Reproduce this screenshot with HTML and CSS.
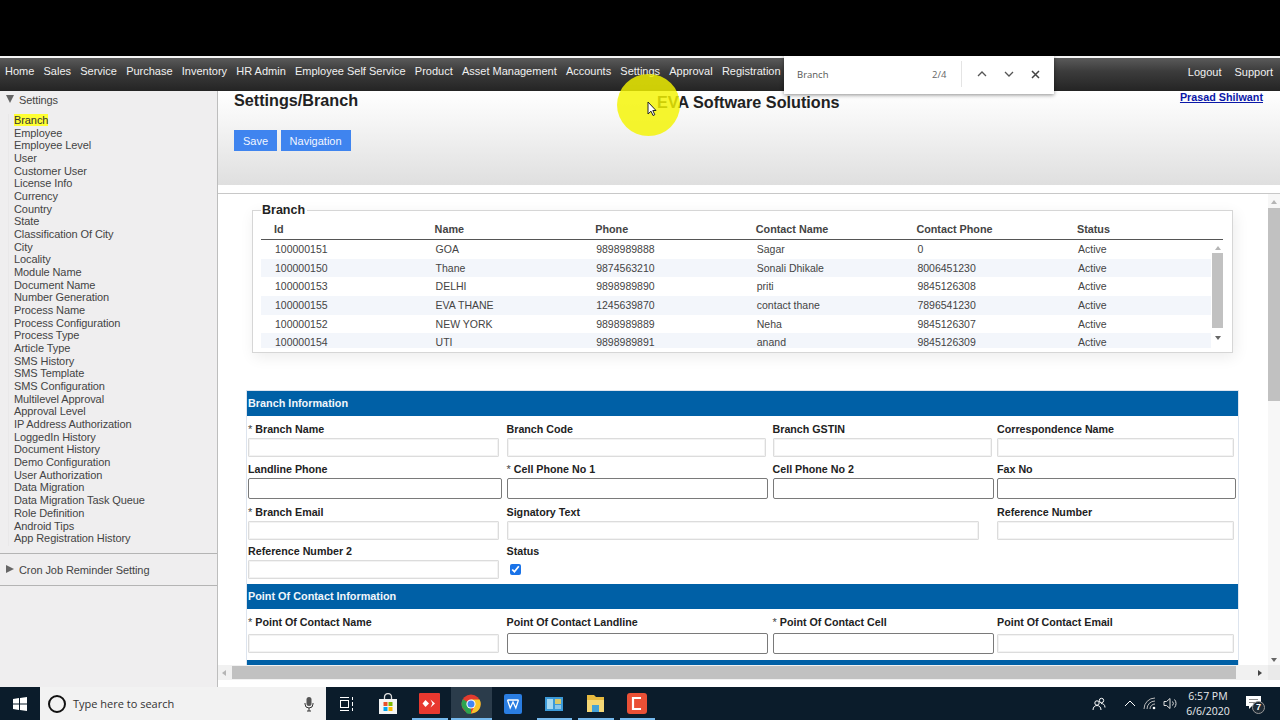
FILE: index.html
```html
<!DOCTYPE html>
<html lang="en">
<head>
<meta charset="utf-8">
<title>Settings/Branch</title>
<link rel="stylesheet" href="styles.css">
</head>
<body>
<div class="letterbox"></div>
<nav class="nav">
  <div class="nav-left">
    <a>Home</a><a>Sales</a><a>Service</a><a>Purchase</a><a>Inventory</a><a>HR Admin</a><a>Employee Self Service</a><a>Product</a><a>Asset Management</a><a>Accounts</a><a>Settings</a><a>Approval</a><a>Registration</a>
  </div>
  <div class="nav-right"><a>Logout</a><a>Support</a></div>
</nav>
<div class="main">
  <aside class="sidebar">
    <div class="tree-head tree-open"><span class="tri-down"></span>Settings</div>
    <ul class="tree-list">
      <li><mark>Branch</mark></li><li>Employee</li><li>Employee Level</li><li>User</li><li>Customer User</li><li>License Info</li><li>Currency</li><li>Country</li><li>State</li><li>Classification Of City</li><li>City</li><li>Locality</li><li>Module Name</li><li>Document Name</li><li>Number Generation</li><li>Process Name</li><li>Process Configuration</li><li>Process Type</li><li>Article Type</li><li>SMS History</li><li>SMS Template</li><li>SMS Configuration</li><li>Multilevel Approval</li><li>Approval Level</li><li>IP Address Authorization</li><li>LoggedIn History</li><li>Document History</li><li>Demo Configuration</li><li>User Authorization</li><li>Data Migration</li><li>Data Migration Task Queue</li><li>Role Definition</li><li>Android Tips</li><li>App Registration History</li>
    </ul>
    <div class="tree-head tree-closed"><span class="tri-right"></span>Cron Job Reminder Setting</div>
  </aside>
  <div class="content">
    <header class="page-head">
      <div class="head-top">
        <h1>Settings/Branch</h1>
        <div class="company">EVA Software Solutions</div>
        <a class="user">Prasad Shilwant</a>
      </div>
      <div class="actions"><button>Save</button><button>Navigation</button></div>
    </header>
    <div class="scroller">
      <div class="viewport">
        <div class="page">
          <fieldset class="panel">
            <legend>Branch</legend>
            <div class="t-row t-head"><span>Id</span><span>Name</span><span>Phone</span><span>Contact Name</span><span>Contact Phone</span><span>Status</span></div>
            <div class="t-wrap">
              <div class="t-body">
                <div class="t-row"><span>100000151</span><span>GOA</span><span>9898989888</span><span>Sagar</span><span>0</span><span>Active</span></div>
                <div class="t-row"><span>100000150</span><span>Thane</span><span>9874563210</span><span>Sonali Dhikale</span><span>8006451230</span><span>Active</span></div>
                <div class="t-row"><span>100000153</span><span>DELHI</span><span>9898989890</span><span>priti</span><span>9845126308</span><span>Active</span></div>
                <div class="t-row"><span>100000155</span><span>EVA THANE</span><span>1245639870</span><span>contact thane</span><span>7896541230</span><span>Active</span></div>
                <div class="t-row"><span>100000152</span><span>NEW YORK</span><span>9898989889</span><span>Neha</span><span>9845126307</span><span>Active</span></div>
                <div class="t-row"><span>100000154</span><span>UTI</span><span>9898989891</span><span>anand</span><span>9845126309</span><span>Active</span></div>
              </div>
              <div class="t-scroll"><i class="arr-up"></i><b></b><i class="arr-down"></i></div>
            </div>
          </fieldset>
          <form class="form">
            <h2 class="section">Branch Information</h2>
            <div class="row r1">
              <label><span><sup>*</sup> Branch Name</span><input class="soft w-a"></label>
              <label><span>Branch Code</span><input class="soft w-b"></label>
              <label><span>Branch GSTIN</span><input class="soft w-c"></label>
              <label><span>Correspondence Name</span><input class="soft w-d"></label>
            </div>
            <div class="row r2">
              <label><span>Landline Phone</span><input class="hard w-a2"></label>
              <label><span><sup>*</sup> Cell Phone No 1</span><input class="hard w-b2"></label>
              <label><span>Cell Phone No 2</span><input class="hard w-c2"></label>
              <label><span>Fax No</span><input class="hard w-d2"></label>
            </div>
            <div class="row r3">
              <label><span><sup>*</sup> Branch Email</span><input class="soft w-a"></label>
              <label class="span2"><span>Signatory Text</span><input class="soft w-sig"></label>
              <label><span>Reference Number</span><input class="soft w-d"></label>
            </div>
            <div class="row r4">
              <label><span>Reference Number 2</span><input class="soft w-a"></label>
              <label><span>Status</span><input class="check" type="checkbox" checked></label>
            </div>
            <h2 class="section s2">Point Of Contact Information</h2>
            <div class="row r6">
              <label><span><sup>*</sup> Point Of Contact Name</span><input class="soft w-a"></label>
              <label><span>Point Of Contact Landline</span><input class="hard w-b2"></label>
              <label><span><sup>*</sup> Point Of Contact Cell</span><input class="hard w-c2"></label>
              <label><span>Point Of Contact Email</span><input class="soft w-d"></label>
            </div>
            <div class="section s3"></div>
          </form>
        </div>
        <div class="v-scroll"><i class="arr-up"></i><b></b><i class="arr-down"></i></div>
      </div>
      <div class="h-scroll"><i class="arr-left"></i><b></b><i class="arr-right"></i></div>
      <div class="scroll-corner"></div>
      <div class="scroll-foot"></div>
    </div>
  </div>
</div>
<footer class="taskbar">
  <div class="start">
    <svg width="14" height="14" viewBox="0 0 14 14"><path fill="#fff" d="M0 2l6-.9V6.600H0zM7 1l7-1v6.600H7zM0 7.400h6v5.500l-6-.9zM7 7.400h7V14l-7-1z"/></svg>
  </div>
  <div class="search">
    <span class="cortana"></span>
    <span class="search-text">Type here to search</span>
    <svg class="mic" width="10" height="16" viewBox="0 0 10 16"><rect x="2.500" y="1" width="5" height="9" rx="2.500" fill="#555"/><path d="M1 7v1a4 4 0 008 0V7M5 12v3M3 15h4" fill="none" stroke="#333" stroke-width="1"/></svg>
  </div>
  <div class="apps">
    <div class="app"><svg width="16" height="16" viewBox="0 0 16 16" fill="none" stroke="#fff" stroke-width="1"><path d="M1 1.500h9M1 14.500h9"/><rect x="1.500" y="4.500" width="8" height="7"/><path d="M13.500 1v3M13.500 6v4M13.500 12v3"/></svg></div>
    <div class="app"><svg width="20" height="22" viewBox="0 0 20 22"><path d="M6.500 6V4a3.500 3.500 0 017 0v2" fill="none" stroke="#ddd" stroke-width="1.300"/><rect x="1" y="6" width="18" height="15" fill="#f4f4f4"/><rect x="5.500" y="9" width="4" height="4" fill="#e8502a"/><rect x="10.500" y="9" width="4" height="4" fill="#7fba00"/><rect x="5.500" y="14" width="4" height="4" fill="#00a4ef"/><rect x="10.500" y="14" width="4" height="4" fill="#ffb900"/></svg></div>
    <div class="app open"><svg width="21" height="21" viewBox="0 0 21 21"><rect width="21" height="21" rx="1" fill="#e8382f"/><path d="M6.500 7l3.500 3.500-3.500 3.500L3.500 10.500z" fill="#fff"/><path d="M11.500 6.500l4.500 4-4.500 4 2-4z" fill="#fff"/></svg></div>
    <div class="app active open"><svg width="20" height="20" viewBox="0 0 20 20"><circle cx="10" cy="10" r="9.500" fill="#e33b2e"/><path d="M10 10L1.800 5.200A9.500 9.500 0 001 13l5 6.500c1 .3 2.500.5 4 .5z" fill="#2ea44f"/><path d="M10 5.500h8.600A9.500 9.500 0 0110 19.500L14 11z" fill="#f7c52b"/><circle cx="10" cy="10" r="4.600" fill="#fff"/><circle cx="10" cy="10" r="3.500" fill="#4285f4"/></svg></div>
    <div class="app"><svg width="18" height="20" viewBox="0 0 18 20"><rect width="18" height="20" rx="2" fill="#2a7de1"/><path d="M3.500 6l2.700 8 2.800-6 2.800 6 2.700-8M3.500 6h11" fill="none" stroke="#fff" stroke-width="1.300"/></svg></div>
    <div class="app open"><svg width="18" height="14" viewBox="0 0 18 14"><rect width="18" height="14" fill="#3c9ad8"/><rect x="2" y="2" width="6" height="10" fill="#a5d8f2"/><rect x="10" y="2" width="6" height="5" fill="#d8c86a"/><rect x="10" y="8" width="6" height="4" fill="#8cc7ea"/></svg></div>
    <div class="app open"><svg width="19" height="19" viewBox="0 0 19 19"><path d="M1 1h7l2 2h8v4H1z" fill="#e6b93f"/><rect x="1" y="6" width="17" height="12" fill="#f5d776"/><rect x="6" y="11" width="7" height="7" fill="#45a2d8"/></svg></div>
    <div class="app open"><svg width="20" height="21" viewBox="0 0 20 21"><rect width="20" height="21" rx="3" fill="#ea5036"/><path d="M14 5H6v11h8" fill="none" stroke="#fff" stroke-width="2.200"/></svg></div>
  </div>
  <div class="tray">
    <svg width="14" height="14" viewBox="0 0 14 14" fill="none" stroke="#fff"><circle cx="9.500" cy="3.500" r="2.200"/><circle cx="5" cy="6" r="2.200"/><path d="M1 13c0-3 2-4.500 4-4.500S9 10 9 13M9 6.500c2 0 4 1 4 4"/></svg>
    <svg class="t-chev" width="12" height="7" viewBox="0 0 12 7" fill="none" stroke="#fff"><path d="M1 6l5-5 5 5"/></svg>
    <svg width="13" height="13" viewBox="0 0 13 13" fill="none" stroke="#bbb"><path d="M1 12A11 11 0 0112 1M4 12a8 8 0 018-8M7 12a5 5 0 015-5"/><circle cx="11" cy="11" r="1.300" fill="#fff" stroke="none"/></svg>
    <svg width="15" height="13" viewBox="0 0 15 13" fill="none" stroke="#ddd"><path d="M1 4.500h2.500L7 1.500v10l-3.500-3H1zM9.500 4.500a3 3 0 010 4M11.500 2.500a6 6 0 010 8"/></svg>
    <div class="clock"><div>6:57 PM</div><div>6/6/2020</div></div>
    <div class="notify">
      <svg width="16" height="14" viewBox="0 0 16 14"><path fill="#fff" d="M0 0h15v10H6l-3 3v-3H0z"/><path stroke="#888" d="M3 3.500h9M3 6.500h9"/></svg>
      <span class="badge">7</span>
    </div>
  </div>
</footer>
<div class="find">
  <span class="find-q">Branch</span>
  <span class="find-n">2/4</span>
  <span class="find-sep"></span>
  <svg width="10" height="6" viewBox="0 0 10 6" fill="none" stroke="#555" stroke-width="1.300"><path d="M1 5l4-4 4 4"/></svg>
  <svg class="find-down" width="10" height="6" viewBox="0 0 10 6" fill="none" stroke="#555" stroke-width="1.300"><path d="M1 1l4 4 4-4"/></svg>
  <svg class="find-x" width="9" height="9" viewBox="0 0 9 9" fill="none" stroke="#444" stroke-width="1.500"><path d="M1 1l7 7M8 1L1 8"/></svg>
</div>
<div class="spot"></div>
<svg class="pointer" width="10" height="16" viewBox="0 0 10 16"><path d="M1 1v12l3-2.800 2 4.300 1.800-.8-2-4.200H9z" fill="#fff" stroke="#222" stroke-width="1"/></svg>
</body>
</html>
```
FILE: styles.css
```css
* { box-sizing: border-box; }
html, body { margin: 0; padding: 0; }
body { width: 1280px; height: 720px; overflow: hidden; position: relative; display: flex; flex-direction: column; background: #fff; font-family: "Liberation Sans", Arial, sans-serif; font-size: 11px; color: #333; }

.letterbox { height: 56px; flex: none; background: #000; }

.nav { height: 35px; flex: none; display: flex; justify-content: space-between; align-items: center; padding: 0 7px 7px 5px; border-top: 2px solid #f4f4f4; background: linear-gradient(#5a5a5a, #3c3c3c 40%, #242424); color: #f0f0f0; font-size: 11px; }
.nav-left { display: flex; gap: 9.200px; }
.nav-right { display: flex; gap: 13px; padding-top: 2px; }

.main { flex: none; height: 596px; display: flex; }

.sidebar { width: 218px; flex: none; background: #efeeef; border-right: 1px solid #bdbdbd; color: #444; font-size: 11px; letter-spacing: -0.09px; }
.tree-head { display: flex; align-items: center; color: #444; }
.tree-open { height: 18px; padding: 0 0 0 6px; }
.tri-down { width: 0; height: 0; border-left: 4.500px solid transparent; border-right: 4.500px solid transparent; border-top: 8px solid #666; margin-right: 5px; margin-top: -2px; }
.tri-right { width: 0; height: 0; border-top: 4.500px solid transparent; border-bottom: 4.500px solid transparent; border-left: 8px solid #666; margin-right: 5px; margin-top: -2px; }
.tree-list { list-style: none; margin: 5px 0 0 8px; padding: 0 0 0 5px; line-height: 12.670px; border-left: 1px solid #e9e8e9; height: 432px; }
.tree-list mark { background: #ffff33; color: #333; }
.tree-closed { height: 33px; margin-top: 7px; padding: 0 0 0 6px; border-top: 1px solid #b4b4b4; border-bottom: 1px solid #b4b4b4; }

.content { flex: 1; min-width: 0; display: flex; flex-direction: column; }

.page-head { height: 94px; flex: none; padding: 1px 17px 0 16px; background: linear-gradient(#fff, #f6f6f6 30%, #dfdfdf); }
.head-top { display: grid; grid-template-columns: 423px 1fr auto; height: 24px; }
.page-head h1 { margin: 0; font-size: 16.200px; line-height: 16px; color: #222; font-weight: bold; }
.company { font-size: 16.200px; font-weight: bold; line-height: 16px; color: #222; padding-top: 2px; }
.user { font-size: 10.750px; font-weight: bold; color: #0b18a8; text-decoration: underline; line-height: 10px; }
.actions { display: flex; gap: 3.500px; margin-top: 14px; }
.actions button { height: 21px; padding: 0 9px; border: 0; background: #3f84ef; color: #f2f6ff; font: 11px "Liberation Sans", Arial, sans-serif; }

.scroller { flex: 1; min-height: 0; margin-top: 8px; border-top: 1px solid #c8c8c8; display: grid; grid-template-columns: 1050px 12px; grid-template-rows: 471px 15px 1fr; }
.viewport { grid-column: 1 / 3; display: flex; min-height: 0; overflow: hidden; }
.page { width: 1050px; flex: none; height: 471px; overflow: hidden; padding: 9px 0 0 28px; }

.panel { width: 981px; margin: 0 0 0 6px; height: 150px; padding: 0 9px 6px 8px; border: 1px solid #d6d6d6; box-shadow: 2px 4px 14px rgba(0,0,0,.08); min-width: 0; }
.panel legend { padding: 0 2px 0 1px; font-size: 12.500px; font-weight: bold; color: #222; line-height: 14px; }
.t-row { display: grid; grid-template-columns: repeat(6, 160.600px); padding-left: 14px; height: 18.670px; line-height: 18.670px; color: #444; font-size: 10.500px; white-space: nowrap; }
.t-head { height: 18px; line-height: 14px; margin-top: 5px; padding-left: 13px; font-weight: bold; color: #444; font-size: 10.800px; border-bottom: 1px solid #555; }
.t-wrap { display: flex; height: 108px; overflow: hidden; }
.t-body { width: 951px; overflow: hidden; }
.t-body .t-row:nth-child(even) { background: #f3f6fb; }
.t-scroll { width: 11px; margin-left: 1px; display: flex; flex-direction: column; align-items: center; padding-top: 6px; }
.t-scroll b { display: block; width: 11px; height: 75px; margin-top: 3px; background: #c1c1c1; }
.t-scroll .arr-down { margin-top: 8px; }

.arr-up, .arr-down, .arr-left, .arr-right { display: block; width: 0; height: 0; flex: none; }
.arr-up { border-left: 3px solid transparent; border-right: 3px solid transparent; border-bottom: 4px solid #b5b5b5; }
.arr-down { border-left: 3px solid transparent; border-right: 3px solid transparent; border-top: 4px solid #666; }
.arr-left { border-top: 3px solid transparent; border-bottom: 3px solid transparent; border-right: 4px solid #b5b5b5; }
.arr-right { border-top: 3px solid transparent; border-bottom: 3px solid transparent; border-left: 4px solid #444; }

.form { width: 993px; margin-top: 37px; border: 1px solid #dde4ee; border-bottom: 0; }
.section { margin: 0; height: 25px; line-height: 24px; padding-left: 1px; background: #0060a6; color: #f0f6fb; font-size: 10.850px; font-weight: bold; }
.s2 { margin-top: 5px; }
.s3 { margin-top: 6px; }
.row { display: grid; grid-template-columns: 258.500px 266px 224.500px 1fr; padding-left: 1px; }
.row label { display: block; }
.row label span { display: block; height: 12px; line-height: 12px; font-size: 10.700px; font-weight: bold; color: #222; white-space: nowrap; }
.row sup { font-size: 11px; font-weight: normal; line-height: 0; vertical-align: baseline; color: #444; }
.row input { display: block; margin: 3px 0 0; padding: 0; background: #fff; }
.span2 { grid-column: span 2; }
.r1 { margin-top: 7px; }
.r2 { margin-top: 6px; }
.r3 { margin-top: 7px; }
.r4 { margin-top: 5px; }
.r6 { margin-top: 7px; }
.r6 input { margin-top: 6px; }
.soft { height: 19px; border: 1px solid #dcdcdc; box-shadow: inset 0 0 0 1px #f3f3f3; border-radius: 1px; }
.hard { height: 21px; border: 1px solid #7a7a7a; border-radius: 2px; }
.r6 .hard { margin-top: 5px; }
.w-a { width: 251px; }
.w-b { width: 259px; }
.w-c { width: 219px; }
.w-d { width: 237px; }
.w-a2 { width: 254px; }
.w-b2 { width: 261px; }
.w-c2 { width: 221px; }
.w-d2 { width: 239px; }
.w-sig { width: 472px; }
.row .check { width: 11px; height: 11px; margin: 7px 0 0 3px; accent-color: #1a73e8; }

.v-scroll { width: 12px; flex: none; height: 471px; background: #f7f7f7; display: flex; flex-direction: column; align-items: center; padding-top: 6px; }
.v-scroll b { display: block; width: 12px; height: 193px; margin-top: 4px; background: #c1c1c1; }
.v-scroll .arr-down { margin-top: auto; margin-bottom: 3px; }
.h-scroll { grid-column: 1; grid-row: 2; display: flex; align-items: center; background: #f1f1f1; padding: 0 6px 0 4px; }
.h-scroll b { flex: 1; height: 13px; margin: 0 22px 0 6px; background: #c1c1c1; }
.scroll-corner { grid-column: 2; grid-row: 2; background: #eaeaea; }
.scroll-foot { grid-column: 1 / 3; grid-row: 3; }

.taskbar { flex: 1; min-height: 0; display: flex; align-items: stretch; background: #0b1c2b; color: #fff; }
.start { width: 40px; display: flex; align-items: center; justify-content: center; }
.search { width: 286px; background: #f2f2f2; display: flex; align-items: center; padding-left: 8px; color: #333; font-family: "Open Sans", sans-serif; font-size: 11px; }
.cortana { width: 18px; height: 18px; border: 2px solid #111; border-radius: 50%; margin-right: 7px; }
.search-text { flex: 1; }
.mic { margin-right: 12px; }
.apps { display: flex; }
.app { width: 41.500px; display: flex; align-items: center; justify-content: center; position: relative; }
.app.open::after { content: ""; position: absolute; left: 3px; right: 3px; bottom: 0; height: 2px; background: #76b9ed; }
.app.active { background: #2b3c4b; }
.app.active::after { left: 0; right: 0; }
.tray { flex: 1; display: flex; align-items: center; justify-content: flex-end; padding-right: 18px; }
.tray svg { margin-left: 7px; }
.tray .t-chev { margin-left: 18px; }
.clock { width: 60px; text-align: center; font-family: "Open Sans", sans-serif; font-size: 10.500px; line-height: 14.500px; color: #e8eaec; }
.notify { position: relative; height: 16px; }
.notify svg { margin-left: 8px; display: block; }
.badge { position: absolute; left: 14px; top: 5px; width: 13px; height: 13px; border-radius: 50%; background: #1e2a35; border: 1px solid #999; font-size: 9px; font-weight: bold; line-height: 11px; text-align: center; }

.find { position: absolute; left: 784px; top: 56px; width: 270px; height: 38px; background: #fff; box-shadow: 0 1px 4px rgba(0,0,0,.45); display: flex; align-items: center; padding: 0 0 2px 13px; font-family: "Open Sans", sans-serif; font-size: 9.500px; color: #555; }
.find-q { width: 135px; }
.find-n { width: 29px; color: #666; }
.find-sep { width: 1px; height: 26px; background: #e4e4e4; margin-right: 15px; }
.find-down { margin-left: 17px; }
.find-x { margin-left: 17px; }

.spot { position: absolute; left: 617px; top: 74px; width: 63px; height: 62px; border-radius: 50%; background: #f4f400; opacity: .82; }
.pointer { position: absolute; left: 647px; top: 101px; }
```
